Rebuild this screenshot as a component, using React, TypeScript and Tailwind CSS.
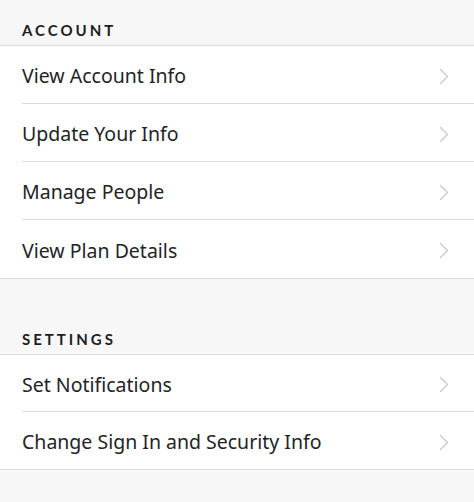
import React from 'react';

const account = ['View Account Info', 'Update Your Info', 'Manage People', 'View Plan Details'];
const settings = ['Set Notifications', 'Change Sign In and Security Info'];

function Chevron() {
  return (
    <svg width="10" height="17" viewBox="0 0 10 17" fill="none" className="shrink-0">
      <path d="M1.5 1.5 L8.5 8.5 L1.5 15.5" stroke="#c9c9ce" strokeWidth="1.4" strokeLinecap="round" strokeLinejoin="round" />
    </svg>
  );
}

function Section({ title, items, top, rowH }: { title: string; items: string[]; top: string; rowH: string }) {
  return (
    <div>
      <div className={`${top} flex items-end px-[22px] pb-[4px] border-b border-[#dcdcdf]`}>
        <span className="text-[15px] font-bold tracking-[0.2em] text-[#1d1d1f]" style={{ fontFamily: 'Lato, sans-serif' }}>
          {title}
        </span>
      </div>
      <div className="bg-white border-b border-[#dcdcdf]">
        {items.map((item, i) => (
          <div key={item} className="pl-[22px]">
            <div
              className={`${rowH} flex items-center justify-between pr-[25px] pt-[3px] ${i < items.length - 1 ? 'border-b border-[#dcdcdf]' : ''}`}
            >
              <span className="text-[19.5px] text-[#232325]">{item}</span>
              <Chevron />
            </div>
          </div>
        ))}
      </div>
    </div>
  );
}

export default function App() {
  return (
    <div className="w-[474px] h-[502px] overflow-hidden bg-[#f7f7f8]" style={{ fontFamily: '"Noto Sans", Lato, sans-serif' }}>
      <Section title="ACCOUNT" items={account} top="h-[46px]" rowH="h-[58px]" />
      <Section title="SETTINGS" items={settings} top="h-[76px]" rowH="h-[57px]" />
    </div>
  );
}
